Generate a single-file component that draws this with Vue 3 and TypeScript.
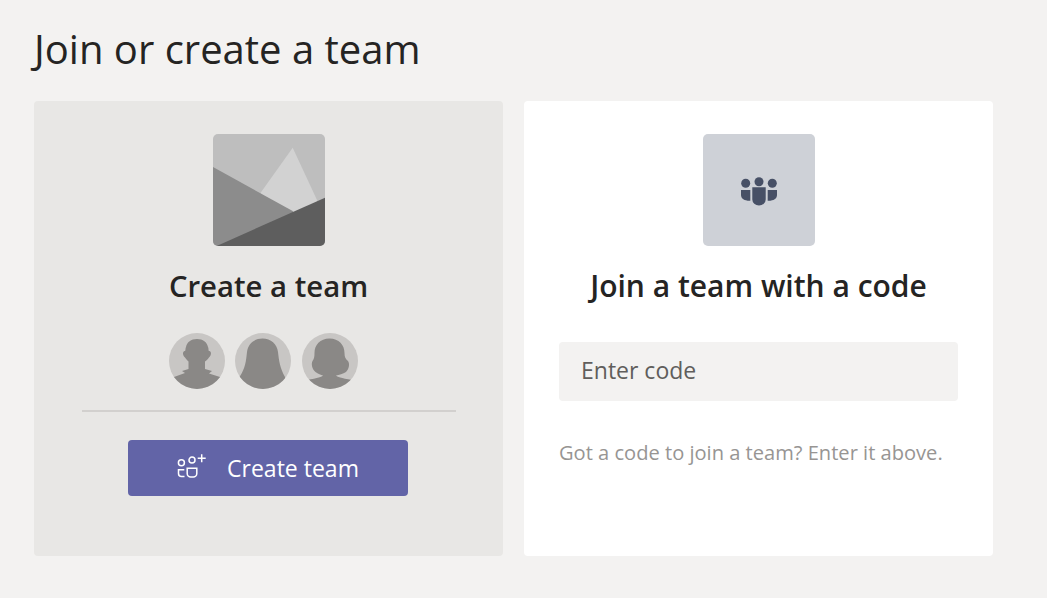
<script setup lang="ts">
const avatars: { id: string; d: string }[] = [
  {
    id: 'a1',
    d: 'M28 6C22 6 18 9 17 14C16 16 17 18 15.5 18C13 19 14 23 16 24.5C17 26 18 27 19.5 28.5L19.5 36L13 38L16 40L5 44L5 56L51 56L51 44L40 40.5L43 38L36 36L36 28.5C38 27 39 26 40 24.5C42 23 43 19 40.5 18C39 18 40 16 39 14C38 9 34 6 28 6Z',
  },
  {
    id: 'a2',
    d: 'M27.5 5.5C19 5.5 13 11 12 19C11 28 10.5 35 4.5 44L4.5 56L50 56L50 44C45 35 44 28 43 19C42 11 36 5.5 27.5 5.5Z',
  },
  {
    id: 'a3',
    d: 'M27.5 5.5C18 5.5 12.5 12 12.5 20C12.5 24 12 26 10.5 28C9 31 10 36 13.5 39C16 41 19 42 21 42.5C20 44 16 45 5 47L5 56L50 56L50 47C39 45 35 44 34 42.5C37 42 41 41 44 39C47 36 48 31 46 28C43.5 26 42.5 24 42.5 20C42.5 12 37 5.5 27.5 5.5Z',
  },
]
</script>

<template>
  <main class="page">
    <h1 class="title">Join or create a team</h1>
    <div class="cards">
      <section class="card card-create">
        <svg class="hero" viewBox="0 0 112 112" width="112" height="112">
          <rect width="112" height="112" fill="#bebebe" />
          <polygon points="79.7,13.7 47.3,59.3 79.7,90 104,80 104,66" fill="#d2d2d2" />
          <polygon points="0,33 79.7,77 100,112 0,112" fill="#8c8c8c" />
          <polygon points="3.7,112 112,63.7 112,112" fill="#5e5e5e" />
        </svg>
        <h2 class="card-title create-title">Create a team</h2>
        <div class="avatars">
          <svg v-for="a in avatars" :key="a.id" class="avatar" viewBox="0 0 56 56" width="56" height="56">
            <clipPath :id="a.id"><circle cx="28" cy="28" r="28" /></clipPath>
            <circle cx="28" cy="28" r="28" fill="#c8c6c4" />
            <path :d="a.d" fill="#8a8886" :clip-path="`url(#${a.id})`" />
          </svg>
        </div>
        <div class="divider"></div>
        <button class="create-btn" type="button">
          <svg class="btn-icon" viewBox="0 0 32 24" width="32" height="24" fill="none" stroke="#fff" stroke-width="1.5">
            <circle cx="4.4" cy="6.8" r="3" />
            <circle cx="15" cy="4.1" r="3" />
            <path d="M20.7 2.3h8M24.7 -1.7v8" />
            <path d="M7.3 13.7H1.5V17.5a3 3 0 0 0 3 3H7.5" />
            <path d="M10.2 12.3H19.8V17.5a3.5 3.5 0 0 1 -3.5 3.5H13.7a3.5 3.5 0 0 1 -3.5 -3.5Z" />
          </svg>
          <span>Create team</span>
        </button>
      </section>
      <section class="card card-join">
        <div class="join-hero">
          <svg viewBox="0 0 40 40" width="40" height="40" fill="#475066">
            <circle cx="6.7" cy="13.3" r="4.5" />
            <circle cx="20" cy="11.7" r="4.5" />
            <circle cx="33.3" cy="13.3" r="4.5" />
            <path d="M13.3 17.3H26.7V29.5a6.7 6 0 0 1 -13.4 0Z" />
            <path d="M2 20H11.3V30.7C6 31 2 29 2 25Z" />
            <path d="M38 20H28.7V30.7C34 31 38 29 38 25Z" />
          </svg>
        </div>
        <h2 class="card-title join-title">Join a team with a code</h2>
        <input class="code-input" type="text" placeholder="Enter code" />
        <p class="hint">Got a code to join a team? Enter it above.</p>
      </section>
    </div>
  </main>
</template>

<style>
html, body { margin: 0; background: #f3f2f1; }
</style>

<style scoped>
.page {
  box-sizing: border-box;
  height: 598px;
  padding: 0 0 0 34px;
  background: #f3f2f1;
  font-family: "Open Sans", "Noto Sans", sans-serif;
  color: #252423;
  overflow: hidden;
}
.title {
  margin: 0;
  padding-top: 23px;
  height: 101px;
  box-sizing: border-box;
  font-size: 40px;
  line-height: 52px;
  font-weight: 400;
}
.cards {
  display: flex;
  gap: 21px;
}
.card {
  box-sizing: border-box;
  width: 469px;
  height: 455px;
  border-radius: 4px;
  padding-top: 33px;
  display: flex;
  flex-direction: column;
  align-items: center;
}
.card-create { background: #e8e7e5; }
.card-join { background: #fff; }
.hero { display: block; border-radius: 5px; }
.card-title {
  margin: 21px 0 0;
  line-height: 38px;
  font-weight: 600;
  color: #252423;
}
.create-title { font-size: 29.3px; }
.join-title { font-size: 30px; }
.avatars {
  display: flex;
  gap: 10.5px;
  margin-top: 28px;
  margin-right: 11px;
}
.avatar { display: block; }
.divider {
  width: 374px;
  height: 2px;
  margin-top: 21px;
  background: #d2d0ce;
}
.create-btn {
  margin-top: 28px;
  margin-right: 1px;
  width: 280px;
  height: 56px;
  border: 0;
  border-radius: 4px;
  background: #6264a7;
  color: #fff;
  font: inherit;
  font-size: 23px;
  display: flex;
  align-items: center;
  justify-content: center;
  gap: 18px;
  padding: 0;
}
.btn-icon { overflow: visible; }
.join-hero {
  width: 112px;
  height: 112px;
  border-radius: 5px;
  background: #ced1d7;
  display: flex;
  align-items: center;
  justify-content: center;
}
.code-input {
  box-sizing: border-box;
  width: 399px;
  height: 59px;
  margin-top: 37px;
  padding: 0 22px 4px;
  border: 0;
  border-radius: 4px;
  background: #f3f2f1;
  font: inherit;
  font-size: 23px;
  color: #484644;
  outline: none;
}
.code-input::placeholder { color: #605e5c; opacity: 1; }
.hint {
  width: 399px;
  margin: 37px 0 0;
  font-size: 20.1px;
  line-height: 30px;
  color: #979593;
}
</style>
